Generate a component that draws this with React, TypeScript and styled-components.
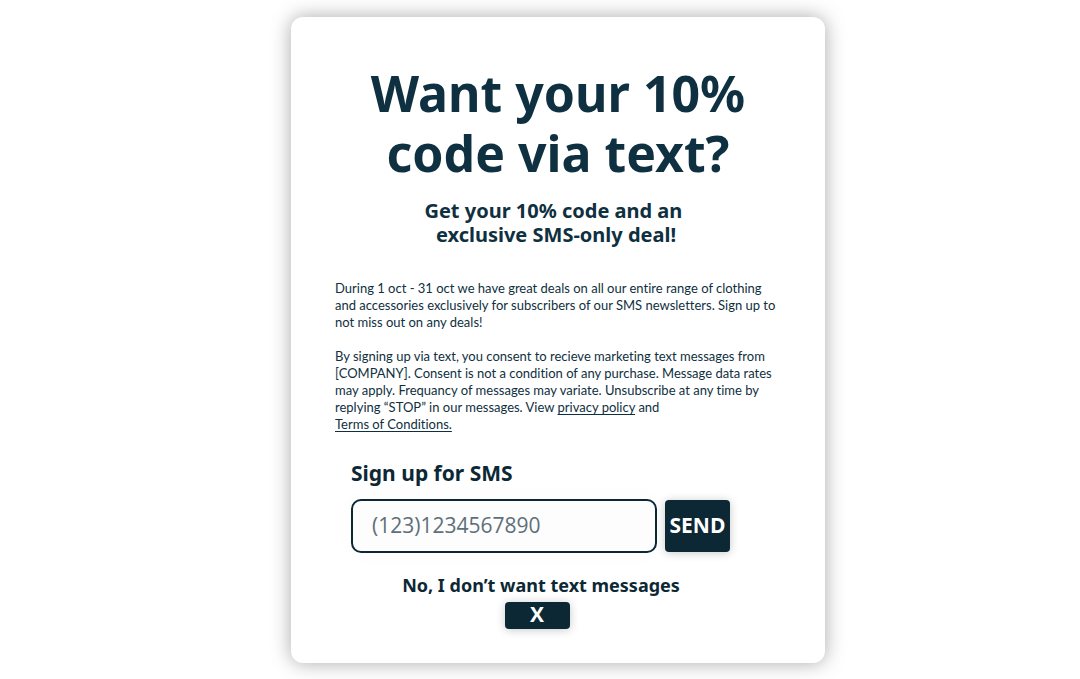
import React, { useState } from "react";
import styled, { createGlobalStyle } from "styled-components";

const ink = "#0f3040";
const deep = "#0c2835";

const GlobalStyle = createGlobalStyle`
  *, *::before, *::after { box-sizing: border-box; }
  body {
    margin: 0;
    background: #fff;
    color: ${ink};
    font-family: "Noto Sans", "Open Sans", sans-serif;
  }
`;

const Page = styled.main`
  display: flex;
  justify-content: center;
  padding: 17px 0 16px 36px;
`;

const Card = styled.section`
  width: 100%;
  max-width: 534px;
  padding: 46px 44px 34px;
  border-radius: 12px;
  background: #fff;
  box-shadow: 0 0 20px rgba(0, 0, 0, 0.34);
`;

const Title = styled.h1`
  margin: 0;
  font-size: 50px;
  line-height: 60px;
  font-weight: 700;
  text-align: center;
`;

const Subtitle = styled.h2`
  margin: 16px 0 0;
  padding-right: 4px;
  font-size: 20px;
  line-height: 24px;
  font-weight: 700;
  text-align: center;
`;

const Copy = styled.div`
  margin-top: 33px;
  font-family: Lato, "Open Sans", sans-serif;
  font-size: 13px;
  line-height: 17px;
  font-variant-ligatures: none;
`;

const Paragraph = styled.p`
  margin: 0 0 17px;
`;

const TextLink = styled.a`
  color: inherit;
  text-decoration: underline;
  text-decoration-thickness: 1px;
  text-underline-offset: 2px;
`;

const Form = styled.form`
  margin: 25px 16px 0;
`;

const Label = styled.label`
  display: block;
  color: ${deep};
  font-size: 21px;
  line-height: 30px;
  font-weight: 700;
`;

const FieldRow = styled.div`
  display: flex;
  align-items: center;
  gap: 8px;
  margin-top: 11px;
`;

const PhoneInput = styled.input`
  flex: 0 1 306px;
  min-width: 0;
  height: 54px;
  padding: 0 19px 2px;
  border: 2px solid ${deep};
  border-radius: 10px;
  background: #fdfdfd;
  box-shadow: 0 0 30px rgba(0, 0, 0, 0.02);
  color: ${deep};
  font: 400 21px "Open Sans", sans-serif;
  outline: none;

  &::placeholder {
    color: #5d707a;
    opacity: 1;
  }
`;

const Button = styled.button<{ $height: number }>`
  width: 65px;
  height: ${({ $height }) => $height}px;
  padding: 0 0 3px;
  border: 0;
  border-radius: 4px;
  background: ${deep};
  box-shadow: 0 1px 10px rgba(0, 0, 0, 0.22);
  color: #fff;
  font: 700 21px/24px "Open Sans", sans-serif;
  cursor: pointer;
`;

const Decline = styled.div`
  display: flex;
  flex-direction: column;
  align-items: center;
  gap: 4px;
  margin-top: 19px;
  padding-right: 42px;
`;

const DeclineText = styled.span`
  padding-left: 8px;
  color: ${deep};
  font-size: 18px;
  line-height: 26px;
  font-weight: 700;
`;

export default function App() {
  const [phone, setPhone] = useState("");

  return (
    <>
      <GlobalStyle />
      <Page>
        <Card>
          <Title>
            Want your 10%
            <br />
            code via text?
          </Title>
          <Subtitle>
            Get your 10% code and an&nbsp;
            <br />
            exclusive SMS-only deal!
          </Subtitle>
          <Copy>
            <Paragraph>
              During 1 oct - 31 oct we have great deals on all our entire range of clothing
              <br />
              and accessories exclusively for subscribers of our SMS newsletters. Sign up to
              <br />
              not miss out on any deals!
            </Paragraph>
            <Paragraph>
              By signing up via text, you consent to recieve marketing text messages from
              <br />
              [COMPANY]. Consent is not a condition of any purchase. Message data rates
              <br />
              may apply. Frequancy of messages may variate. Unsubscribe at any time by
              <br />
              replying “STOP” in our messages. View <TextLink href="#privacy">privacy policy</TextLink> and
              <br />
              <TextLink href="#terms">Terms of Conditions.</TextLink>
            </Paragraph>
          </Copy>
          <Form onSubmit={(event) => event.preventDefault()}>
            <Label htmlFor="phone">Sign up for SMS</Label>
            <FieldRow>
              <PhoneInput
                id="phone"
                type="tel"
                placeholder="(123)1234567890"
                value={phone}
                onChange={(event) => setPhone(event.target.value)}
              />
              <Button type="submit" $height={52}>SEND</Button>
            </FieldRow>
          </Form>
          <Decline>
            <DeclineText id="decline">No, I don’t want text messages</DeclineText>
            <Button type="button" $height={27} aria-describedby="decline">X</Button>
          </Decline>
        </Card>
      </Page>
    </>
  );
}
